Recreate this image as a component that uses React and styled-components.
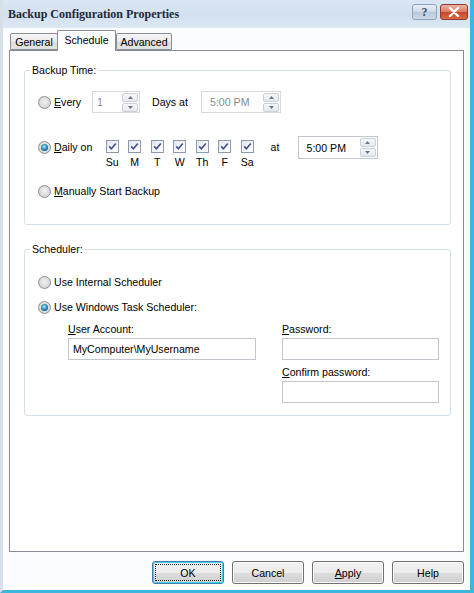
import React from "react";
import styled, { createGlobalStyle } from "styled-components";

const Global = createGlobalStyle`
  html, body {
    margin: 0;
    padding: 0;
    background: #fff;
  }
  body {
    font-family: "Liberation Sans", Arial, sans-serif;
    font-size: 10.6px;
    color: #000;
  }
`;

const App = () => {
  const days = ["Su", "M", "T", "W", "Th", "F", "Sa"];
  return (
    <React.Fragment>
      <Global />
      <Window>
        <TitleBar>
          <Title>Backup Configuration Properties</Title>
          <CaptionButtons>
            <HelpButton>?</HelpButton>
            <CloseButton>
              <svg width="12" height="10" viewBox="0 0 12 10">
                <path d="M2 1 L10 9 M10 1 L2 9" stroke="#fff" strokeWidth="2.4" strokeLinecap="round" />
              </svg>
            </CloseButton>
          </CaptionButtons>
        </TitleBar>

        <Body>
          <TabStrip>
            <Tab $w={48}>General</Tab>
            <Tab $w={59} $active>Schedule</Tab>
            <Tab $w={56}>Advanced</Tab>
          </TabStrip>

          <Panel>
            <Group>
              <Legend>Backup Time:</Legend>
              <GroupBody $top={14} $bottom={26}>
                <Row>
                  <RadioItem $w={54}>
                    <Radio />
                    <span><U>E</U>very</span>
                  </RadioItem>
                  <SpinBox $w={48} $disabled>
                    <SpinValue $disabled>1</SpinValue>
                    <Spinner />
                  </SpinBox>
                  <Text $ml={12} $w={49}>Days at</Text>
                  <SpinBox $w={80} $disabled>
                    <SpinValue $disabled $pad={8}>5:00 PM</SpinValue>
                    <Spinner />
                  </SpinBox>
                </Row>

                <DailyRow>
                  <RadioItem $w={63} $mt={4}>
                    <Radio $checked />
                    <span><U>D</U>aily on</span>
                  </RadioItem>
                  <DayGrid>
                    {days.map((d) => (
                      <DayCol key={d}>
                        <CheckBox>
                          <svg width="9" height="9" viewBox="0 0 9 9">
                            <path d="M1.2 4.4 L3.4 6.8 L7.8 1.6" fill="none" stroke="#3f4f93" strokeWidth="1.6" />
                          </svg>
                        </CheckBox>
                        <DayLabel>{d}</DayLabel>
                      </DayCol>
                    ))}
                  </DayGrid>
                  <Text $ml={12} $mt={4} $w={27}>at</Text>
                  <SpinBox $w={80} $h={23}>
                    <SpinValue $pad={8}>5:00 PM</SpinValue>
                    <Spinner />
                  </SpinBox>
                </DailyRow>

                <RadioItem $mt={15}>
                  <Radio />
                  <span><U>M</U>anually Start Backup</span>
                </RadioItem>
              </GroupBody>
            </Group>

            <Group $mt={18}>
              <Legend>Scheduler:</Legend>
              <GroupBody $top={19} $bottom={12}>
                <RadioItem>
                  <Radio />
                  <span>Use Internal Scheduler</span>
                </RadioItem>
                <RadioItem $mt={11}>
                  <Radio $checked />
                  <span>Use Windows Task Scheduler:</span>
                </RadioItem>

                <AccountGrid>
                  <Field>
                    <FieldLabel><U>U</U>ser Account:</FieldLabel>
                    <TextBox>MyComputer\MyUsername</TextBox>
                  </Field>
                  <Field>
                    <FieldLabel><U>P</U>assword:</FieldLabel>
                    <TextBox />
                  </Field>
                  <div />
                  <Field>
                    <FieldLabel><U>C</U>onfirm password:</FieldLabel>
                    <TextBox />
                  </Field>
                </AccountGrid>
              </GroupBody>
            </Group>
          </Panel>

          <ButtonRow>
            <DialogButton $focus>
              <FocusRing>OK</FocusRing>
            </DialogButton>
            <DialogButton>Cancel</DialogButton>
            <DialogButton><U>A</U>pply</DialogButton>
            <DialogButton>Help</DialogButton>
          </ButtonRow>
        </Body>
      </Window>
    </React.Fragment>
  );
};

const Spinner = () => (
  <SpinButtons>
    <SpinHalf>
      <svg width="5" height="3" viewBox="0 0 5 3">
        <path d="M0 3 L2.5 0 L5 3 Z" fill="#6a7688" />
      </svg>
    </SpinHalf>
    <SpinHalf>
      <svg width="5" height="3" viewBox="0 0 5 3">
        <path d="M0 0 L2.5 3 L5 0 Z" fill="#6a7688" />
      </svg>
    </SpinHalf>
  </SpinButtons>
);

const Window = styled.div`
  width: 474px;
  height: 593px;
  box-sizing: border-box;
  display: flex;
  flex-direction: column;
  background: #fbfcfd;
  border-left: 3px solid #d7dfe9;
  border-right: 4px solid #3db5dc;
  border-bottom: 3px solid #3db5dc;
`;

const TitleBar = styled.div`
  height: 28px;
  flex: none;
  display: flex;
  align-items: center;
  justify-content: space-between;
  padding-left: 5px;
  background: linear-gradient(to bottom, #dbe6f4 0%, #d2e0f0 55%, #dde8f5 100%);
`;

const Title = styled.div`
  font-family: "Liberation Serif", "Times New Roman", serif;
  font-weight: bold;
  font-size: 12px;
  color: #1e2a3a;
`;

const CaptionButtons = styled.div`
  display: flex;
  align-items: center;
  gap: 3px;
  margin-right: 2px;
  align-self: flex-start;
  margin-top: 4px;
`;

const CaptionBase = styled.div`
  height: 16px;
  box-sizing: border-box;
  border-radius: 3px;
  display: flex;
  align-items: center;
  justify-content: center;
`;

const HelpButton = styled(CaptionBase)`
  width: 25px;
  border: 1px solid #8fa3bc;
  background: linear-gradient(to bottom, #eaf0f7 0%, #ccd8e6 50%, #b9c9dc 51%, #cbd8e7 100%);
  font-family: "Liberation Serif", serif;
  font-weight: bold;
  font-size: 12px;
  color: #3b4f6c;
`;

const CloseButton = styled(CaptionBase)`
  width: 28px;
  border: 1px solid #8d3a2c;
  background: linear-gradient(to bottom, #eeb2a2 0%, #dc7a62 50%, #c8462a 51%, #dc6a46 100%);
`;

const Body = styled.div`
  flex: 1;
  display: flex;
  flex-direction: column;
  padding: 2px 6px 6px 6px;
  min-height: 0;
`;

const TabStrip = styled.div`
  display: flex;
  align-items: flex-end;
  height: 20px;
  padding-left: 1px;
`;

const Tab = styled.div`
  position: relative;
  z-index: ${(p) => (p.$active ? 2 : 1)};
  width: ${(p) => p.$w}px;
  height: ${(p) => (p.$active ? 21 : 17)}px;
  margin-bottom: ${(p) => (p.$active ? -1 : 0)}px;
  margin-left: ${(p) => (p.$active ? -1 : 0)}px;
  box-sizing: border-box;
  border: 1px solid #8a8e97;
  border-bottom: ${(p) => (p.$active ? "none" : "1px solid #8a8e97")};
  border-radius: 2px 2px 0 0;
  background: ${(p) =>
    p.$active ? "#fff" : "linear-gradient(to bottom, #f4f4f4 0%, #ebebeb 50%, #dcdcdc 51%, #e4e4e4 100%)"};
  display: flex;
  align-items: ${(p) => (p.$active ? "flex-start" : "center")};
  padding-top: ${(p) => (p.$active ? 3 : 0)}px;
  justify-content: center;
`;

const Panel = styled.div`
  flex: 1;
  box-sizing: border-box;
  border: 1px solid #898c95;
  background: #fff;
  padding: 13px 12px 0 14px;
`;

const Group = styled.fieldset`
  margin: ${(p) => p.$mt || 0}px 0 0 0;
  padding: 0;
  border: 1px solid #d5dfe5;
  border-radius: 3px;
  min-width: 0;
`;

const Legend = styled.legend`
  margin-left: 5px;
  padding: 0 2px;
  line-height: 13px;
`;

const GroupBody = styled.div`
  display: flex;
  flex-direction: column;
  align-items: flex-start;
  padding: ${(p) => p.$top}px 12px ${(p) => p.$bottom}px 13px;
`;

const Row = styled.div`
  display: flex;
  align-items: center;
  height: 22px;
`;

const DailyRow = styled.div`
  display: flex;
  align-items: flex-start;
  margin-top: 23px;
`;

const U = styled.span`
  text-decoration: underline;
  text-underline-offset: 1px;
`;

const Text = styled.span`
  display: inline-block;
  margin-left: ${(p) => p.$ml || 0}px;
  margin-top: ${(p) => p.$mt || 0}px;
  width: ${(p) => (p.$w ? `${p.$w}px` : "auto")};
  line-height: 14px;
  white-space: nowrap;
  flex: none;
`;

const RadioItem = styled.div`
  display: flex;
  align-items: center;
  gap: 3px;
  height: 14px;
  margin-top: ${(p) => p.$mt || 0}px;
  width: ${(p) => (p.$w ? `${p.$w}px` : "auto")};
  flex: none;
  white-space: nowrap;
`;

const Radio = styled.span`
  width: 13px;
  height: 13px;
  box-sizing: border-box;
  border-radius: 50%;
  border: 1px solid #8c9196;
  background: radial-gradient(circle at 50% 45%, #f2f2f2 0%, #dcdcdc 55%, #c4c4c4 100%);
  display: flex;
  align-items: center;
  justify-content: center;
  flex: none;

  &::after {
    content: "";
    display: ${(p) => (p.$checked ? "block" : "none")};
    width: 7px;
    height: 7px;
    border-radius: 50%;
    background: radial-gradient(circle at 45% 40%, #c8f4ff 0%, #3ea0cf 35%, #0f4f7a 85%);
  }
`;

const SpinBox = styled.div`
  width: ${(p) => p.$w}px;
  height: ${(p) => p.$h || 22}px;
  box-sizing: border-box;
  border: 1px solid ${(p) => (p.$disabled ? "#d6dadf" : "#c2c7ce")};
  background: #fff;
  display: flex;
  align-items: center;
  padding-right: 1px;
  flex: none;
`;

const SpinValue = styled.span`
  flex: 1;
  padding-left: ${(p) => p.$pad || 4}px;
  color: ${(p) => (p.$disabled ? "#8a8a8a" : "#000")};
  white-space: nowrap;
`;

const SpinButtons = styled.div`
  width: 16px;
  display: flex;
  flex-direction: column;
  gap: 1px;
`;

const SpinHalf = styled.div`
  height: 9px;
  box-sizing: border-box;
  border: 1px solid #c9d0d9;
  border-radius: 2px;
  background: linear-gradient(to bottom, #f6f7f9, #e4e8ee);
  display: flex;
  align-items: center;
  justify-content: center;
`;

const DayGrid = styled.div`
  display: grid;
  grid-template-columns: repeat(7, 22.5px);
  margin-top: 4px;
`;

const DayCol = styled.div`
  display: flex;
  flex-direction: column;
  align-items: center;
`;

const CheckBox = styled.span`
  width: 13px;
  height: 13px;
  box-sizing: border-box;
  border: 1px solid #8e99ad;
  background: linear-gradient(135deg, #dfe4ec 0%, #f6f8fb 60%, #fff 100%);
  display: flex;
  align-items: center;
  justify-content: center;
`;

const DayLabel = styled.span`
  margin-top: 3px;
  line-height: 13px;
`;

const AccountGrid = styled.div`
  display: grid;
  grid-template-columns: 188px 157px;
  column-gap: 26px;
  row-gap: 6px;
  margin: 9px 0 0 30px;
`;

const Field = styled.div`
  display: flex;
  flex-direction: column;
  gap: 2px;
`;

const FieldLabel = styled.span`
  line-height: 13px;
`;

const TextBox = styled.div`
  height: 22px;
  box-sizing: border-box;
  border: 1px solid #c2c7ce;
  background: #fff;
  padding: 0 4px;
  display: flex;
  align-items: center;
`;

const ButtonRow = styled.div`
  display: flex;
  justify-content: flex-end;
  gap: 8px;
  margin-top: 9px;
`;

const DialogButton = styled.div`
  width: 72px;
  height: 23px;
  box-sizing: border-box;
  border: 1px solid ${(p) => (p.$focus ? "#3c7fb1" : "#707070")};
  border-radius: 3px;
  background: linear-gradient(to bottom, #f2f2f2 0%, #ebebeb 50%, #dddddd 51%, #cfcfcf 100%);
  box-shadow: inset 0 0 0 1px ${(p) => (p.$focus ? "#48d0f0" : "#fcfcfc")};
  display: flex;
  align-items: center;
  justify-content: center;
  padding: 2px;
`;

const FocusRing = styled.span`
  align-self: stretch;
  flex: 1;
  display: flex;
  align-items: center;
  justify-content: center;
  border: 1px dotted #222;
`;

export default App;
